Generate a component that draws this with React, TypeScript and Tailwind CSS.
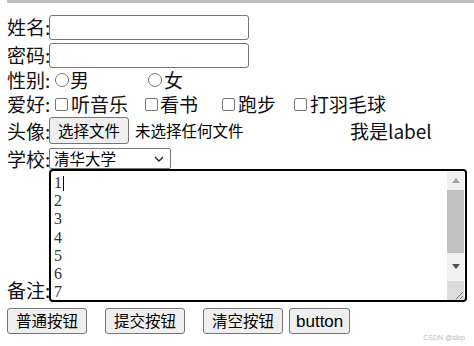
const body = "font-['Noto_Sans_CJK_SC','Noto_Sans',sans-serif]";
const ctrl = "text-[15.5px] leading-none text-black";

const Radio = () => (
	<span className="inline-block w-[14px] h-[14px] rounded-full border border-[#767676] bg-white" />
);

const Check = () => (
	<span className="inline-block w-[13px] h-[13px] rounded-[2px] border border-[#767676] bg-white" />
);

const Btn = ({ label, className = '' }: { label: string; className?: string }) => (
	<button
		className={`h-[26px] px-[6px] bg-[#efefef] border border-[#767676] rounded-[3px] whitespace-nowrap ${ctrl} ${className}`}
	>
		{label}
	</button>
);

const Label = ({ text }: { text: string }) => (
	<span className="w-[42px] shrink-0 whitespace-nowrap">{text}</span>
);

const LINES = ['1', '2', '3', '4', '5', '6', '7'];

export default function App() {
	return (
		<div
			className={`w-[474px] h-[346px] bg-white text-[19px] leading-[20px] text-[#111] whitespace-nowrap overflow-hidden ${body}`}
		>
			<div className="h-[3px] ml-[7px] bg-[#bdbdbd]" />
			<div className="flex flex-col pl-[7px] pt-[10px]">
				<div className="flex items-center h-[28px]">
					<Label text="姓名:" />
					<span className="w-[200px] h-[25px] border border-[#767676] rounded-[3px]" />
				</div>
				<div className="flex items-center h-[28px]">
					<Label text="密码:" />
					<span className="w-[200px] h-[25px] border border-[#767676] rounded-[3px]" />
				</div>
				<div className="flex items-center h-[22px]">
					<Label text="性别:" />
					<span className="ml-[6px] flex items-center gap-[1px]">
						<Radio />
						<span className="w-[22px]">男</span>
					</span>
					<span className="ml-[56px] flex items-center gap-[2px]">
						<Radio />
						<span>女</span>
					</span>
				</div>
				<div className="flex items-center h-[26px]">
					<Label text="爱好:" />
					<span className="ml-[6px] flex items-center gap-[3px]">
						<Check />
						<span className="w-[57px]">听音乐</span>
					</span>
					<span className="ml-[17px] flex items-center gap-[2px]">
						<Check />
						<span className="w-[40px]">看书</span>
					</span>
					<span className="ml-[22px] flex items-center gap-[3px]">
						<Check />
						<span className="w-[37px]">跑步</span>
					</span>
					<span className="ml-[19px] flex items-center gap-[3px]">
						<Check />
						<span>打羽毛球</span>
					</span>
				</div>
				<div className="flex items-center h-[27px]">
					<Label text="头像:" />
					<Btn label="选择文件" className="w-[80px] h-[27px]" />
					<span className={`ml-[6px] w-[215px] ${ctrl}`}>未选择任何文件</span>
					<span>我是label</span>
				</div>
				<div className="flex items-end h-[25px]">
					<Label text="学校:" />
					<span
						className={`w-[122px] h-[21px] border border-[#767676] rounded-[2px] flex items-center justify-between pl-[4px] pr-[6px] ${ctrl}`}
					>
						清华大学
						<svg width="10" height="6" viewBox="0 0 10 6" fill="none" stroke="#222" strokeWidth="1.3">
							<path d="M1 1l4 4 4-4" />
						</svg>
					</span>
				</div>
				<div className="flex items-end">
					<span className="w-[42px] shrink-0 leading-[22px] mb-[1px]">备注:</span>
					<div className="w-[418px] h-[133px] border-2 border-black rounded-[4px] flex bg-white">
						<div className="flex-1 pl-[3px] pt-[3px] font-['Liberation_Serif',serif] text-[16px] leading-[18.2px] text-[#333]">
							{LINES.map((n, i) => (
								<div key={n} className="flex items-center h-[18.2px]">
									{n}
									{i === 0 && <span className="ml-[1px] w-[1px] h-[15px] bg-black" />}
								</div>
							))}
						</div>
						<div className="w-[17px] mr-[1px] flex flex-col bg-[#f1f1f1]">
							<div className="h-[19px] flex items-center justify-center">
								<svg width="8" height="5" viewBox="0 0 8 5"><path d="M0 5L4 0L8 5Z" fill="#a3a3a3" /></svg>
							</div>
							<div className="h-[63px] bg-[#c1c1c1]" />
							<div className="flex-1 flex items-center justify-center pb-[2px]">
								<svg width="8" height="5" viewBox="0 0 8 5"><path d="M0 0L8 0L4 5Z" fill="#505050" /></svg>
							</div>
							<div className="h-[19px] bg-[#dcdcdc] flex items-end justify-end">
								<svg width="10" height="10" viewBox="0 0 10 10" stroke="#7a7a7a" strokeWidth="1">
									<path d="M9 2L2 9M9 6L6 9" />
								</svg>
							</div>
						</div>
					</div>
				</div>
				<div className="flex items-center mt-[6px] gap-[18px]">
					<Btn label="普通按钮" className="w-[80px]" />
					<Btn label="提交按钮" className="w-[80px]" />
					<div className="flex gap-[6px]">
						<Btn label="清空按钮" className="w-[80px]" />
						<Btn label="button" className="w-[61px] font-['Liberation_Sans',sans-serif] text-[17px]" />
					</div>
				</div>
				<div className="self-end pr-[9px] text-[7px] leading-[8px] text-[#bbb] font-['Liberation_Sans',sans-serif]">
					CSDN @slep
				</div>
			</div>
		</div>
	);
}
